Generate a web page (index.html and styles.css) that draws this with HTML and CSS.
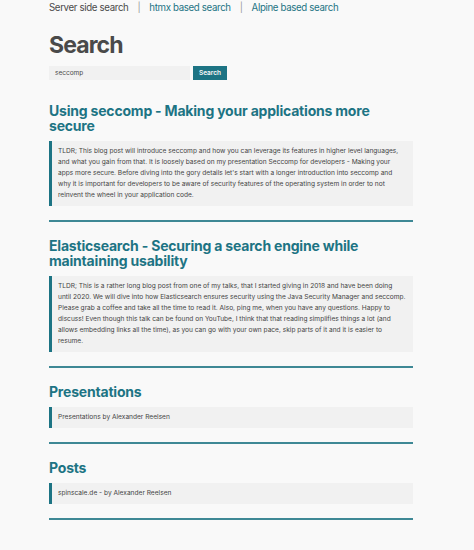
FILE: index.html
```html
<!DOCTYPE html>
<html lang="en">

<head>
    <meta charset="UTF-8" />
    <meta name="viewport" content="width=device-width, initial-scale=1.0" />
    <title>Search</title>
    <link rel="stylesheet" href="styles.css">
</head>

<body>
    <div class="page">
        <nav class="nav">
            <span class="nav-current">Server side search</span>
            <span class="nav-sep">|</span>
            <a href="#">htmx based search</a>
            <span class="nav-sep">|</span>
            <a href="#">Alpine based search</a>
        </nav>

        <h1>Search</h1>

        <form class="search-form">
            <input type="text" name="q" value="seccomp" />
            <button type="submit">Search</button>
        </form>

        <div class="results">
            <div class="result">
                <h2><a href="#">Using seccomp - Making your applications more secure</a></h2>
                <blockquote>TLDR; This blog post will introduce seccomp and how you can leverage its features in higher level languages, and what you gain from that. It is loosely based on my presentation Seccomp for developers - Making your apps more secure. Before diving into the gory details let's start with a longer introduction into seccomp and why it is important for developers to be aware of security features of the operating system in order to not reinvent the wheel in your application code.</blockquote>
                <hr />
            </div>
            <div class="result">
                <h2><a href="#">Elasticsearch - Securing a search engine while maintaining usability</a></h2>
                <blockquote>TLDR; This is a rather long blog post from one of my talks, that I started giving in 2018 and have been doing until 2020. We will dive into how Elasticsearch ensures security using the Java Security Manager and seccomp. Please grab a coffee and take all the time to read it. Also, ping me, when you have any questions. Happy to discuss! Even though this talk can be found on YouTube, I think that that reading simplifies things a lot (and allows embedding links all the time), as you can go with your own pace, skip parts of it and it is easier to resume.</blockquote>
                <hr />
            </div>
            <div class="result">
                <h2><a href="#">Presentations</a></h2>
                <blockquote>Presentations by Alexander Reelsen</blockquote>
                <hr />
            </div>
            <div class="result">
                <h2><a href="#">Posts</a></h2>
                <blockquote>spinscale.de - by Alexander Reelsen</blockquote>
                <hr />
            </div>
        </div>
    </div>
</body>

</html>
```

FILE: styles.css
```css
* {
    margin: 0;
    padding: 0;
    box-sizing: border-box;
}

body {
    background-color: #f9f9f9;
    color: #4a4a4a;
    font-family: Inter, "Noto Sans", sans-serif;
}

a {
    color: #1d7484;
    text-decoration: none;
}

.page {
    width: 364px;
    margin-left: 49px;
}

.nav {
    display: flex;
    align-items: center;
    gap: 9px;
    height: 15px;
    font-size: 9.7px;
    line-height: 15px;
    letter-spacing: -0.35px;
}

.nav-sep {
    color: #999;
}

h1 {
    margin-top: 16px;
    font-size: 23px;
    line-height: 28px;
    font-weight: 700;
    letter-spacing: -0.9px;
    color: #4a4a4a;
}

.search-form {
    display: flex;
    gap: 3px;
    margin-top: 7px;
}

.search-form input {
    width: 141px;
    height: 14px;
    padding: 0 6px;
    border: none;
    background-color: #f1f1f1;
    color: #4a4a4a;
    font-family: inherit;
    font-size: 6.5px;
}

.search-form button {
    width: 34px;
    height: 14px;
    border: none;
    background-color: #1d7484;
    color: #f9f9f9;
    font-family: inherit;
    font-size: 6.5px;
    font-weight: 600;
}

.results {
    margin-top: 23px;
}

.result h2 {
    font-size: 14px;
    line-height: 15px;
    font-weight: 700;
    letter-spacing: -0.2px;
}

.result blockquote {
    margin-top: 8px;
    padding: 5px 6px 5px 6px;
    border-left: 3px solid #1d7484;
    background-color: #f1f1f1;
    color: #444;
    font-size: 6.6px;
    line-height: 11px;
}

.result hr {
    margin: 14px 0 16px;
    border: none;
    border-top: 2px solid #1d7484;
    opacity: 0.85;
}
```
